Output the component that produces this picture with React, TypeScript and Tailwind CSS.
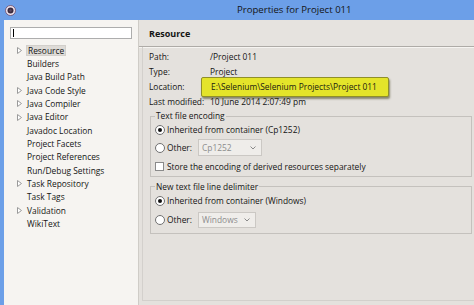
import React from "react";

const tree: { label: string; arrow: boolean; selected?: boolean }[] = [
  { label: "Resource", arrow: true, selected: true },
  { label: "Builders", arrow: false },
  { label: "Java Build Path", arrow: false },
  { label: "Java Code Style", arrow: true },
  { label: "Java Compiler", arrow: true },
  { label: "Java Editor", arrow: true },
  { label: "Javadoc Location", arrow: false },
  { label: "Project Facets", arrow: false },
  { label: "Project References", arrow: false },
  { label: "Run/Debug Settings", arrow: false },
  { label: "Task Repository", arrow: true },
  { label: "Task Tags", arrow: false },
  { label: "Validation", arrow: true },
  { label: "WikiText", arrow: false },
];

function Arrow() {
  return (
    <svg width="5" height="7" viewBox="0 0 5 7">
      <polygon points="0.5,0.5 4.5,3.5 0.5,6.5" fill="#ffffff" stroke="#9a9a9a" strokeWidth="1" />
    </svg>
  );
}

function Radio({ checked }: { checked: boolean }) {
  return (
    <span className="w-[10px] h-[10px] rounded-full border border-[#707070] bg-white flex items-center justify-center shrink-0">
      {checked && <span className="w-[4px] h-[4px] rounded-full bg-[#111]" />}
    </span>
  );
}

function Chevron() {
  return (
    <svg width="6" height="4" viewBox="0 0 6 4">
      <polyline points="0.5,0.5 3,3 5.5,0.5" fill="none" stroke="#8a8a8a" strokeWidth="1" />
    </svg>
  );
}

function Combo({ text, w }: { text: string; w: string }) {
  return (
    <div className={`${w} h-full border border-[#cbc8c4] bg-[#efedea] flex items-center justify-between pl-[3px] pr-[5px] text-[#8c8c8c]`}>
      <span>{text}</span>
      <Chevron />
    </div>
  );
}

export default function App() {
  return (
    <div className="w-[474px] h-[305px] overflow-hidden bg-[#6c9fe8] flex flex-col font-['Open_Sans',sans-serif] text-[8.4px] leading-[12px] text-[#141414]">
      {/* title bar */}
      <div className="h-[20px] flex items-center shrink-0">
        <svg className="ml-[5px]" width="11" height="11" viewBox="0 0 11 11">
          <circle cx="5.5" cy="5.5" r="5" fill="#efe4ee" stroke="#6b4a68" strokeWidth="0.8" />
          <circle cx="5.5" cy="5.5" r="3" fill="#3a2a3e" />
          <circle cx="5.5" cy="5.5" r="1.2" fill="#5a4a60" />
        </svg>
        <span className="ml-[221px] text-[9.6px] leading-[14px] text-[#151515]">Properties for Project 011</span>
      </div>
      {/* body */}
      <div className="flex-1 flex pl-[4px] min-h-0">
        {/* left panel */}
        <div className="w-[135px] bg-[#f6f4f1] border-r border-[#cfccc7] flex flex-col">
          <div className="mt-[7px] ml-[6px] w-[122px] h-[12px] border border-[#adadad] bg-white flex items-center">
            <span className="ml-[2px] w-[1px] h-[8px] bg-black" />
          </div>
          <div className="mt-[5px] flex flex-col">
            {tree.map((t) => (
              <div key={t.label} className="h-[13.33px] flex items-center pl-[13px]">
                <span className="w-[10px] flex items-center">{t.arrow && <Arrow />}</span>
                <span
                  className={
                    t.selected
                      ? "-ml-[1px] px-[1px] bg-[#dedbd7] border border-[#d2cfcb] leading-[9px] h-[11px] flex items-center"
                      : ""
                  }
                >
                  {t.label}
                </span>
              </div>
            ))}
          </div>
        </div>
        {/* right panel */}
        <div className="flex-1 bg-[#e4e1dd] flex flex-col relative">
          <div className="h-[27px] shrink-0 flex items-center pl-[10px] pt-[2px] bg-[#e6e3df] border-b border-[#aeaba7] shadow-[0_1px_0_#f6f4f1]">
            <span className="font-bold text-[9px]">Resource</span>
          </div>
          <div className="flex-1 ml-[3px] mb-[4px] border-l border-b border-[#d3d0cc] pl-[6px] pr-[2px] pt-[3px] flex flex-col">
            {[
              ["Path:", "/Project 011"],
              ["Type:", "Project"],
              ["Location:", "E:\\Selenium\\Selenium Projects\\Project 011"],
              ["Last modified:", "10 June 2014 2:07:49 pm"],
            ].map(([k, v]) => (
              <div key={k} className="h-[14.8px] flex items-center">
                <span className="w-[61px]">{k}</span>
                <span>{v}</span>
              </div>
            ))}
            <fieldset className="mt-[1px] ml-[1px] border border-[#c4c1bd] px-[4px] pb-[2px]">
              <legend className="px-[1px] leading-[12px]">Text file encoding</legend>
              <div className="mt-[1px] h-[14px] flex items-center gap-[2px]">
                <Radio checked />
                <span>Inherited from container (Cp1252)</span>
              </div>
              <div className="mt-[2px] h-[17px] flex items-center">
                <Radio checked={false} />
                <span className="ml-[2px] w-[31px]">Other:</span>
                <Combo text="Cp1252" w="w-[64px]" />
              </div>
              <div className="mt-[3.5px] h-[14px] flex items-center gap-[3px]">
                <span className="w-[9px] h-[9px] border border-[#8a8a8a] bg-white shrink-0" />
                <span>Store the encoding of derived resources separately</span>
              </div>
            </fieldset>
            <fieldset className="mt-[4px] ml-[1px] border border-[#c4c1bd] px-[4px] pb-[5px]">
              <legend className="px-[1px] leading-[12px]">New text file line delimiter</legend>
              <div className="mt-[1.5px] h-[14px] flex items-center gap-[2px]">
                <Radio checked />
                <span>Inherited from container (Windows)</span>
              </div>
              <div className="mt-[3.5px] h-[16px] flex items-center">
                <Radio checked={false} />
                <span className="ml-[2px] w-[31px]">Other:</span>
                <Combo text="Windows" w="w-[58px]" />
              </div>
            </fieldset>
          </div>
          {/* tooltip */}
          <div className="absolute left-[62px] top-[57px] w-[188px] h-[20px] bg-[#e4e42a] border border-[#8f8f2a] rounded-[2px] shadow-[1px_2px_2px_rgba(60,60,20,0.55)] flex items-center pl-[9px] text-[#1a1a10]">
            E:\Selenium\Selenium Projects\Project 011
          </div>
        </div>
      </div>
    </div>
  );
}
